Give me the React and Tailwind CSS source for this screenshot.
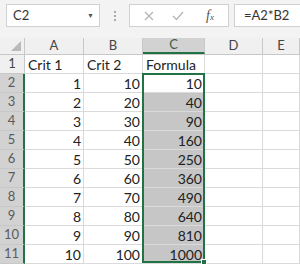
import React from "react";

const cols = [
  { key: "A", w: "w-[59px]" },
  { key: "B", w: "w-[59px]" },
  { key: "C", w: "w-[62px]" },
  { key: "D", w: "w-[58px]" },
  { key: "E", w: "flex-1" },
];

const rows = [
  ["Crit 1", "Crit 2", "Formula"],
  [1, 10, 10],
  [2, 20, 40],
  [3, 30, 90],
  [4, 40, 160],
  [5, 50, 250],
  [6, 60, 360],
  [7, 70, 490],
  [8, 80, 640],
  [9, 90, 810],
  [10, 100, 1000],
];

export default function App() {
  return (
    <div className="w-[300px] h-[264px] overflow-hidden bg-white text-[#222] font-['Lato','Liberation_Sans',sans-serif]">
      {/* formula bar */}
      <div className="h-[38px] bg-[#f3f3f3] flex items-start pt-[4px] pl-[6px]">
        <div className="w-[94px] h-[23px] bg-white border border-[#d0d0d0] flex items-center justify-between pl-[6px] pr-[5px] text-[13px] text-[#333]">
          <span>C2</span>
          <span className="text-[7px] text-[#555]">▼</span>
        </div>
        <div className="w-[29px] h-[23px] flex flex-col items-center justify-center gap-[2px]">
          <span className="w-[2px] h-[2px] bg-[#aaa]" />
          <span className="w-[2px] h-[2px] bg-[#aaa]" />
          <span className="w-[2px] h-[2px] bg-[#aaa]" />
        </div>
        <div className="w-[100px] h-[23px] bg-white border border-[#d0d0d0] flex items-center">
          <svg width="10" height="10" viewBox="0 0 10 10" className="ml-[14px]">
            <path d="M1 1 L9 9 M9 1 L1 9" stroke="#b5b5b5" strokeWidth="1.3" fill="none" />
          </svg>
          <svg width="12" height="10" viewBox="0 0 12 10" className="ml-[18px]">
            <path d="M1 5 L4.5 8.5 L11 1" stroke="#b5b5b5" strokeWidth="1.3" fill="none" />
          </svg>
          <span className="ml-[22px] font-['Liberation_Serif',serif] italic text-[14px] text-[#555]">
            f<span className="text-[9px]">x</span>
          </span>
        </div>
        <div className="ml-[5px] flex-1 h-[23px] bg-white border border-[#d0d0d0] border-r-0 flex items-center pl-[9px] text-[13px] text-[#333]">
          =A2*B2
        </div>
      </div>

      {/* column headers */}
      <div className="flex h-[17px] bg-[#f0f0f0] border-b border-[#c8c8c8]">
        <div className="w-[25px] border-r border-[#c8c8c8] relative">
          <svg width="10" height="10" viewBox="0 0 10 10" className="absolute right-[3px] bottom-[3px]">
            <path d="M10 0 L10 10 L0 10 Z" fill="#b9b9b9" />
          </svg>
        </div>
        {cols.map((c) => (
          <div
            key={c.key}
            className={`${c.w} flex items-center justify-center text-[13px] border-r border-[#c8c8c8] ${
              c.key === "C"
                ? "bg-[#d2d2d2] border-b-2 border-b-[#217346] text-[#3b5e49]"
                : "text-[#444]"
            }`}
          >
            {c.key}
          </div>
        ))}
      </div>

      {/* grid */}
      <div className="relative">
        {rows.map((r, i) => {
          const sel = i > 0;
          return (
            <div key={i} className="flex h-[19px]">
              <div
                className={`w-[25px] flex items-center justify-center text-[13px] border-b border-[#c8c8c8] ${
                  sel
                    ? "bg-[#d2d2d2] border-r-2 border-r-[#217346] text-[#5a5a5a]"
                    : "bg-[#f0f0f0] border-r border-r-[#c8c8c8] text-[#444]"
                }`}
              >
                {i + 1}
              </div>
              {cols.map((c, j) => {
                const v = r[j];
                const isText = typeof v === "string";
                const grey = j === 2 && i > 1;
                return (
                  <div
                    key={c.key}
                    className={`${c.w} flex items-center text-[14px] border-r border-b border-[#dadada] ${
                      isText ? "justify-start pl-[3px]" : "justify-end pr-[2px]"
                    } ${grey ? "bg-[#c6c6c6]" : "bg-white"}`}
                  >
                    {v}
                  </div>
                );
              })}
            </div>
          );
        })}
        {/* selection outline C2:C11 */}
        <div className="absolute left-[142px] top-[18px] w-[63px] h-[190px] border-2 border-[#217346] pointer-events-none" />
        <div className="absolute left-[201px] top-[204px] w-[6px] h-[6px] bg-[#217346] border border-white" />
      </div>
    </div>
  );
}
